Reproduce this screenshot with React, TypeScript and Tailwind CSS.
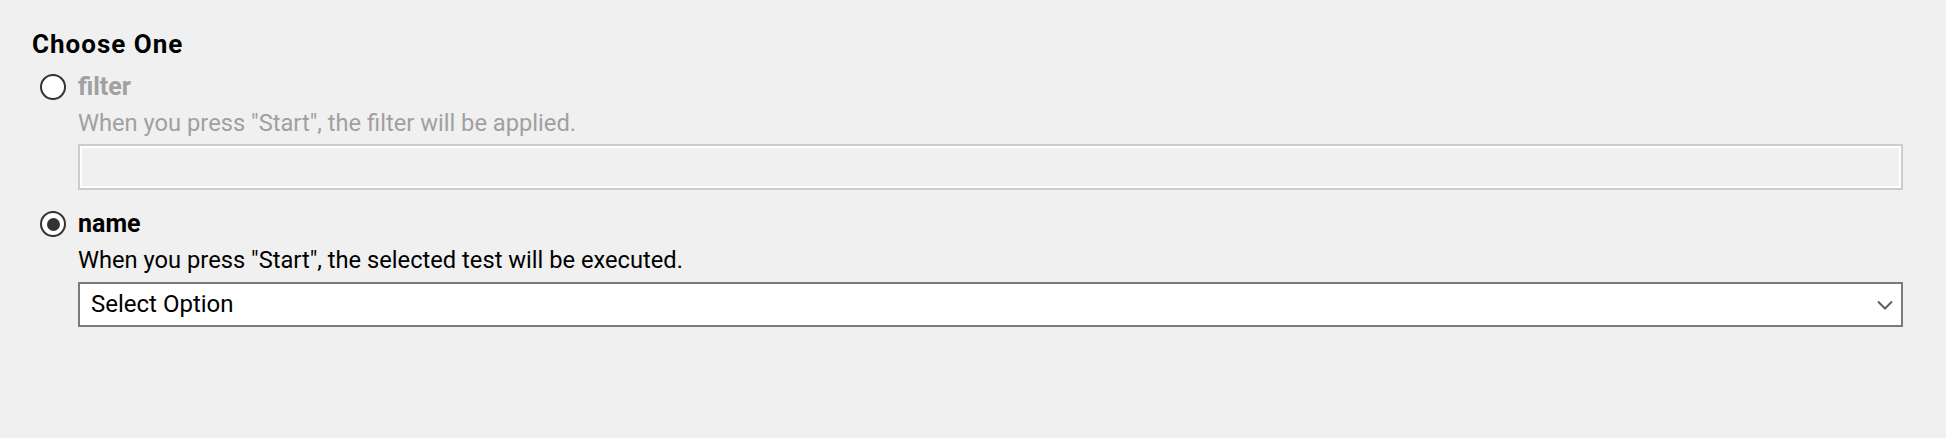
import React from "react";

function Radio({ checked }: { checked: boolean }) {
  return (
    <span className="flex h-[26px] w-[26px] shrink-0 items-center justify-center rounded-full border-2 border-[#333333] bg-white">
      {checked && <span className="h-[13px] w-[13px] rounded-full bg-[#333333]" />}
    </span>
  );
}

export default function App() {
  const font = { fontFamily: "Roboto, 'Noto Sans', sans-serif" };
  return (
    <div
      className="flex h-[438px] w-[1946px] flex-col bg-[#f0f0f0] pl-[32px] pr-[43px] pt-[28px]"
      style={font}
    >
      <div className="h-[32px] text-[26px] font-bold leading-[32px] tracking-[1px] text-black">
        Choose One
      </div>

      <div className="mt-[14px] flex h-[26px] items-center gap-[12px] pl-[8px]">
        <Radio checked={false} />
        <span className="text-[25px] font-bold leading-[26px] text-[#a0a0a0]">filter</span>
      </div>
      <div className="ml-[46px] mt-[8px] h-[30px] text-[23.7px] leading-[30px] text-[#a0a0a0]">
        When you press "Start", the filter will be applied.
      </div>
      <div className="ml-[46px] mt-[6px] h-[46px] border-2 border-[#cccccc] bg-[#f0f0f0] shadow-[inset_0_0_0_2px_#ffffff]" />

      <div className="mt-[21px] flex h-[26px] items-center gap-[12px] pl-[8px]">
        <Radio checked={true} />
        <span className="text-[25px] font-bold leading-[26px] text-black">name</span>
      </div>
      <div className="ml-[46px] mt-[8px] h-[30px] text-[23.7px] leading-[30px] text-black">
        When you press "Start", the selected test will be executed.
      </div>
      <div className="ml-[46px] mt-[7px] flex h-[45px] items-center justify-between border-2 border-[#7a7a7a] bg-white pl-[11px] pr-[8px]">
        <span className="text-[24px] leading-[41px] text-black">Select Option</span>
        <svg width="16" height="10" viewBox="0 0 16 10" fill="none">
          <polyline points="1,1.5 8,8.5 15,1.5" stroke="#606060" strokeWidth="2" />
        </svg>
      </div>
    </div>
  );
}
